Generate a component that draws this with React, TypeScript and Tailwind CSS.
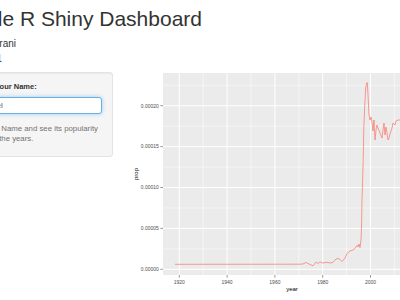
const points: [number, number][] = [
  [175, 264.3], [300, 264.2], [303, 264], [306, 262.5], [308, 263.5], [310, 264.5],
  [313, 265.8], [316, 262], [318, 263.5], [320, 261.8], [323, 263.2], [325, 262.5],
  [327, 262.3], [330, 263], [333, 262.3], [336, 259], [338, 258.5], [340, 259.5],
  [342, 261.5], [345, 258], [347, 253.5], [350, 251], [353, 250], [355, 248.5],
  [357, 245.5], [358, 247], [359, 244], [360, 247.5], [361, 240], [361.5, 228],
  [362, 200], [362.5, 185], [363.3, 155], [363.8, 128], [364.7, 107], [365.5, 90],
  [366.3, 84], [367.3, 82.5], [368, 95], [369, 115], [370, 120], [371, 117],
  [372, 122], [373, 131], [374, 120], [375, 140], [376, 130], [377, 125],
  [378, 128], [380, 133], [382, 138], [383, 130], [384, 123], [385, 135],
  [386, 127], [387, 133], [388, 140], [389, 138], [390, 134], [392, 128],
  [393, 123], [395, 125], [396, 121], [398, 120], [400, 120], [404, 122],
];

const yMajor = [
  { y: 269.3, label: "0.00000" },
  { y: 228.4, label: "0.00005" },
  { y: 187.5, label: "0.00010" },
  { y: 146.6, label: "0.00015" },
  { y: 105.7, label: "0.00020" },
];
const yMinor = [248.85, 207.95, 167.05, 126.15, 85.25];
const xMajor = [
  { x: 179.3, label: "1920" },
  { x: 227.1, label: "1940" },
  { x: 274.9, label: "1960" },
  { x: 322.7, label: "1980" },
  { x: 370.5, label: "2000" },
];
const xMinor = [203.2, 251, 298.8, 346.6, 394.4];

function NamePlot() {
  const d = points.map(([x, y], i) => `${i ? "L" : "M"}${x} ${y}`).join(" ");
  return (
    <svg width="280" height="234" viewBox="120 66 280 234" className="block shrink-0 ml-[7px]">
      <rect x="163" y="73" width="270" height="202" fill="#ebebeb" />
      {yMinor.map((y) => (
        <line key={y} x1="163" x2="433" y1={y} y2={y} stroke="#fff" strokeWidth="0.5" />
      ))}
      {xMinor.map((x) => (
        <line key={x} x1={x} x2={x} y1="73" y2="275" stroke="#fff" strokeWidth="0.5" />
      ))}
      {yMajor.map((t) => (
        <line key={t.y} x1="163" x2="433" y1={t.y} y2={t.y} stroke="#fff" strokeWidth="1" />
      ))}
      {xMajor.map((t) => (
        <line key={t.x} x1={t.x} x2={t.x} y1="73" y2="275" stroke="#fff" strokeWidth="1" />
      ))}
      <path d={d} fill="none" stroke="#f8766d" strokeOpacity="0.8" strokeWidth="0.9" strokeLinejoin="round" />
      {yMajor.map((t) => (
        <g key={t.label}>
          <line x1="160.3" x2="163" y1={t.y} y2={t.y} stroke="#333" strokeWidth="0.5" />
          <text x="158.8" y={t.y + 1.8} textAnchor="end" fontSize="5" fill="#4d4d4d">
            {t.label}
          </text>
        </g>
      ))}
      {xMajor.map((t) => (
        <g key={t.label}>
          <line x1={t.x} x2={t.x} y1="275" y2="277.7" stroke="#333" strokeWidth="0.5" />
          <text x={t.x} y="283.6" textAnchor="middle" fontSize="5" fill="#4d4d4d">
            {t.label}
          </text>
        </g>
      ))}
      <text x="292" y="290.5" textAnchor="middle" fontSize="6" fill="#000">
        year
      </text>
      <text transform="translate(137.6 174) rotate(-90)" textAnchor="middle" fontSize="6" fill="#000">
        prop
      </text>
    </svg>
  );
}

export default function App() {
  return (
    <div className="w-[400px] h-[300px] overflow-hidden bg-white text-[#333] font-['Liberation_Sans',Arial,sans-serif]">
      <h2 className="mt-[7px] h-[23px] w-[300px] ml-[-98px] text-right text-[21px] leading-[23px] whitespace-nowrap">
        Simple R Shiny Dashboard
      </h2>
      <div className="mt-[6px] text-[10px] leading-[15px]">
        <div className="w-[200px] ml-[-184px] text-right whitespace-nowrap">Author: Mohammad Tehrani</div>
        <div className="w-[200px] ml-[-198px] text-right whitespace-nowrap">Date: 2021</div>
      </div>
      <div className="flex items-start">
        <div className="mt-[6px] ml-[-40px] w-[153px] h-[85px] shrink-0 rounded-[3px] border border-[#e3e3e3] bg-[#f5f5f5] pl-[13px] pt-[9px] shadow-[inset_0_1px_1px_rgba(0,0,0,0.05)]">
          <div className="text-[7.5px] leading-[10px] font-bold whitespace-nowrap">Enter Your Name:</div>
          <div className="mt-[5px] w-[128px] h-[17px] rounded-[3px] border border-[#66afe9] bg-white pl-[5px] flex items-center text-[8px] text-[#555] shadow-[0_0_4px_rgba(102,175,233,0.6)]">
            Daniel
          </div>
          <div className="mt-[9.6px] text-[7.8px] leading-[10.7px] text-[#737373] whitespace-nowrap">
            <div>Enter a Name and see its popularity</div>
            <div>across the years.</div>
          </div>
        </div>
        <NamePlot />
      </div>
    </div>
  );
}
